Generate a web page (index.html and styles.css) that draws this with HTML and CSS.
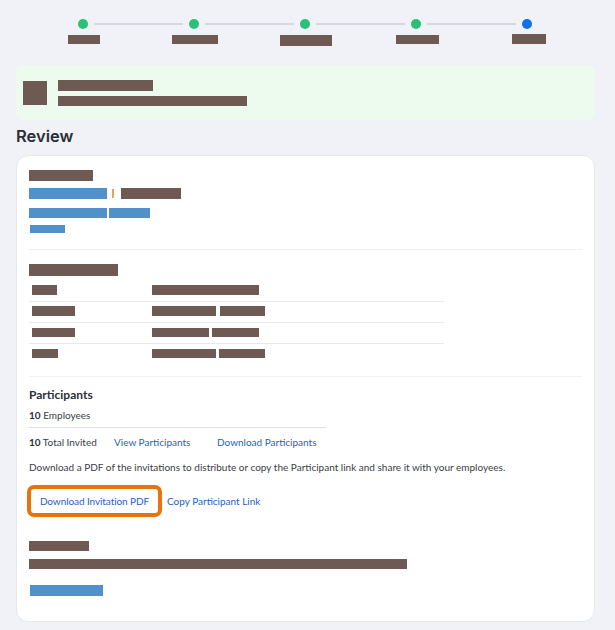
FILE: index.html
```html
<!DOCTYPE html>
<html lang="en">
<head>
<meta charset="utf-8">
<title>Review</title>
<link rel="stylesheet" href="styles.css">
</head>
<body>
<div class="page">
  <div class="stepper">
    <div class="step-track">
      <span class="dot"></span><span class="connector"></span>
      <span class="dot"></span><span class="connector"></span>
      <span class="dot"></span><span class="connector"></span>
      <span class="dot"></span><span class="connector"></span>
      <span class="dot current"></span>
    </div>
    <div class="step-labels">
      <span class="bar w32 h9"></span>
      <span class="bar w46 h9"></span>
      <span class="bar w52 h11"></span>
      <span class="bar w43 h9"></span>
      <span class="bar w34 h10 up1"></span>
    </div>
  </div>

  <div class="banner">
    <span class="bar banner-icon"></span>
    <div class="banner-text">
      <span class="bar w95 h11"></span>
      <span class="bar w189 h10"></span>
    </div>
  </div>

  <h1 class="title">Review</h1>

  <main class="card">
    <section class="summary">
      <span class="bar w64 h11"></span>
      <div class="row row-a">
        <span class="bar blue w78 h11"></span>
        <span class="pipe"></span>
        <span class="bar w60 h11"></span>
      </div>
      <div class="row row-b">
        <span class="bar blue w78 h10"></span>
        <span class="bar blue w41 h10"></span>
      </div>
      <span class="bar blue w35 h8 inset1 row-c"></span>
    </section>

    <section class="details">
      <span class="bar w89 h12"></span>
      <div class="table">
        <div class="tr"><div class="td-a"><span class="bar w25 h10"></span></div><div class="td-b"><span class="bar w107 h10"></span></div></div>
        <div class="tr"><div class="td-a"><span class="bar w43 h10"></span></div><div class="td-b"><span class="bar w64 h10"></span><span class="bar w45 h10 g4"></span></div></div>
        <div class="tr"><div class="td-a"><span class="bar w43 h9"></span></div><div class="td-b"><span class="bar w57 h9"></span><span class="bar w47 h9 g3"></span></div></div>
        <div class="tr"><div class="td-a"><span class="bar w26 h9"></span></div><div class="td-b"><span class="bar w64 h9"></span><span class="bar w46 h9 g3"></span></div></div>
      </div>
    </section>

    <section class="participants">
      <h2 class="sub">Participants</h2>
      <p class="count"><b>10</b> Employees</p>
      <div class="total">
        <span class="total-label"><b>10</b> Total Invited</span>
        <a class="link view" href="#">View Participants</a>
        <a class="link dl" href="#">Download Participants</a>
      </div>
      <p class="note">Download a PDF of the invitations to distribute or copy the Participant link and share it with your employees.</p>
      <div class="actions">
        <a class="link callout" href="#">Download Invitation PDF</a>
        <a class="link" href="#">Copy Participant Link</a>
      </div>
    </section>

    <section class="closing">
      <span class="bar w60 h10"></span>
      <span class="bar w378 h10 closing-line"></span>
      <span class="bar blue w73 h11 inset1 closing-link"></span>
    </section>
  </main>
</div>
</body>
</html>
```

FILE: styles.css
```css
* { box-sizing: border-box; }
html, body { margin: 0; height: 100%; }
body {
  background: #f0f2f7;
  font-family: "Lato", "Liberation Sans", sans-serif;
  font-size: 10px;
  color: #3a3d45;
  overflow: hidden;
}
.page { padding: 19px 20px 0 16px; width: 615px; }

.bar { display: block; background: #6e5a52; flex: none; }
.bar.blue { background: #5191c9; }
.w25 { width: 25px; } .w26 { width: 26px; } .w32 { width: 32px; } .w34 { width: 34px; }
.w35 { width: 35px; } .w41 { width: 41px; } .w43 { width: 43px; } .w45 { width: 45px; }
.w46 { width: 46px; } .w47 { width: 47px; } .w52 { width: 52px; } .w57 { width: 57px; }
.w60 { width: 60px; } .w64 { width: 64px; } .w73 { width: 73px; } .w78 { width: 78px; }
.w89 { width: 89px; } .w95 { width: 95px; } .w107 { width: 107px; } .w189 { width: 189px; }
.w378 { width: 378px; }
.h8 { height: 8px; } .h9 { height: 9px; } .h10 { height: 10px; } .h11 { height: 11px; } .h12 { height: 12px; }
.inset1 { margin-left: 1px; }
.g3 { margin-left: 3px; } .g4 { margin-left: 4px; }

.stepper { height: 46px; }
.step-track { display: flex; align-items: center; padding-left: 62px; height: 10px; }
.dot { width: 10px; height: 10px; border-radius: 50%; background: #2bbf78; flex: none; }
.dot.current { background: #0f6fec; }
.connector { width: 89px; height: 2px; background: #d6d8df; margin: 0 6px 0 6px; flex: none; }
.step-labels { display: grid; grid-template-columns: repeat(5, 111.25px); justify-items: center; align-items: start; margin: 6px 0 0 12px; }
.up1 { margin-top: -1px; }

.banner {
  display: flex; align-items: center; gap: 11px;
  height: 55px; padding-left: 7px;
  background: #edfbee; border-radius: 7px;
}
.banner-icon { width: 24px; height: 24px; }
.banner-text { display: flex; flex-direction: column; gap: 5px; }

.title { margin: 6px 0 0; font: 600 16.5px/20px "Inter", "Liberation Sans", sans-serif; color: #2b2f38; height: 29px; }

.card {
  height: 467px; padding: 14px 12px 0 12px;
  background: #fff; border: 1px solid #e6e8ee; border-radius: 12px;
}
.row { display: flex; align-items: center; }
.row-a { margin-top: 7px; }
.row-b { margin-top: 9px; gap: 2px; }
.row-c { margin-top: 7px; }
.pipe { width: 2px; height: 9px; background: #d9a860; margin: 0 7px 0 5px; }
.summary { height: 80px; border-bottom: 1px solid #eef0f3; }

.details { padding-top: 14px; height: 127px; border-bottom: 1px solid #eef0f3; }
.table { width: 415px; margin-top: 4px; }
.tr { display: flex; align-items: center; height: 21px; border-bottom: 1.5px solid #e6e9f0; padding: 0 0 2px 3px; }
.tr:first-child { height: 22px; }
.tr:last-child { border-bottom: 0; height: 24px; padding-bottom: 5px; }
.td-a { width: 120px; }
.td-b { display: flex; }

.participants { padding-top: 10px; }
.sub { margin: 0; font: 700 12px/16px "Lato", "Liberation Sans", sans-serif; color: #2b2f38; }
.count { margin: 5px 0 0; line-height: 14px; height: 20px; width: 297px; border-bottom: 1px solid #dcdfe7; }
b { font-weight: 700; color: #2b2f38; }
.total { display: flex; align-items: center; height: 16px; margin-top: 6px; }
.total-label { width: 85px; }
.link { color: #1f5fc4; text-decoration: none; }
.view { width: 103px; }
.note { margin: 9px 0 0; line-height: 16px; }
.actions { display: flex; align-items: center; margin: 10px 0 0 -2px; }
.callout {
  display: flex; align-items: center; justify-content: center;
  width: 135px; height: 32px; margin-right: 5px;
  background: #fff; border: 4px solid #e8720c; border-radius: 7px;
  letter-spacing: -0.08px;
}

.closing { margin-top: 24px; }
.closing-line { margin-top: 8px; }
.closing-link { margin-top: 16px; }
```
